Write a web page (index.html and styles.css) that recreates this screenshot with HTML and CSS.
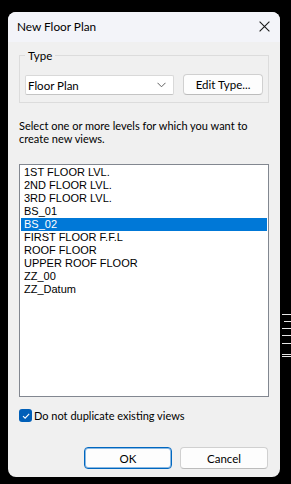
FILE: index.html
```html
<!DOCTYPE html>
<html>
<head>
<meta charset="utf-8">
<link rel="stylesheet" href="styles.css">
</head>
<body>
<div class="dialog">
  <div class="titlebar">
    <span class="title">New Floor Plan</span>
    <svg class="close" width="11" height="11" viewBox="0 0 11 11"><path d="M0.6 0.6L10.4 10.4M10.4 0.6L0.6 10.4" stroke="#1a1a1a" stroke-width="1.1" fill="none"/></svg>
  </div>
  <div class="content">
    <div class="group">
      <span class="legend">Type</span>
      <div class="typerow">
        <div class="select">
          <span>Floor Plan</span>
          <svg width="9" height="6" viewBox="0 0 9 6"><path d="M0.5 0.8L4.5 4.8L8.5 0.8" stroke="#606060" stroke-width="1" fill="none"/></svg>
        </div>
        <div class="btn edit">Edit Type...</div>
      </div>
    </div>
    <p class="instr">Select one or more levels for which you want to create new views.</p>
    <div class="list">
      <div class="item">1ST FLOOR LVL.</div>
      <div class="item">2ND FLOOR LVL.</div>
      <div class="item">3RD FLOOR LVL.</div>
      <div class="item">BS_01</div>
      <div class="item sel">BS_02</div>
      <div class="item">FIRST FLOOR F.F.L</div>
      <div class="item">ROOF FLOOR</div>
      <div class="item">UPPER ROOF FLOOR</div>
      <div class="item">ZZ_00</div>
      <div class="item">ZZ_Datum</div>
    </div>
    <div class="check">
      <span class="box"><svg width="10" height="10" viewBox="0 0 10 10"><path d="M2 5.2L4.1 7.2L8.2 2.8" stroke="#fff" stroke-width="1.1" fill="none"/></svg></span>
      <span>Do not duplicate existing views</span>
    </div>
    <div class="buttons">
      <div class="btn ok">OK</div>
      <div class="btn">Cancel</div>
    </div>
  </div>
</div>
<div class="bgdeco">
  <div class="l1"></div><div class="l2"></div><div class="l3"></div><div class="l4"></div><div class="l5"></div><div class="l6"></div><div class="l7"></div>
</div>
</body>
</html>
```
FILE: styles.css
```css
html, body {
  margin: 0;
  padding: 0;
  background: #000;
  width: 291px;
  height: 484px;
  overflow: hidden;
}
body {
  font-family: Lato, "Liberation Sans", sans-serif;
  font-size: 11px;
  color: #000;
  position: relative;
}
.dialog {
  margin: 12px 0 0 8px;
  width: 272px;
  height: 465px;
  background: #f0f0f0;
  border-radius: 8px;
  overflow: hidden;
  display: flex;
  flex-direction: column;
}
.titlebar {
  height: 30px;
  background: #f3f4f9;
  display: flex;
  align-items: center;
  justify-content: space-between;
  padding: 0 10px 0 9px;
  flex: none;
}
.title {
  font-size: 11.8px;
  color: #000;
  line-height: 14px;
}
.close {
  margin-top: -2px;
}
.content {
  padding: 0 11px;
  display: flex;
  flex-direction: column;
}
.group {
  position: relative;
  margin-top: 13px;
  height: 48px;
  box-sizing: border-box;
  border: 1px solid #dcdcdc;
  padding: 19px 5px 0 5px;
}
.legend {
  position: absolute;
  top: -7px;
  left: 5px;
  padding: 0 3px;
  line-height: 14px;
  background: #f0f0f0;
  font-size: 11.5px;
}
.typerow {
  display: flex;
  align-items: flex-start;
  justify-content: space-between;
}
.select {
  width: 149px;
  height: 20px;
  box-sizing: border-box;
  background: #fff;
  border: 1px solid #d9d9d9;
  border-bottom-color: #c4c4c4;
  border-radius: 2px;
  display: flex;
  align-items: center;
  justify-content: space-between;
  padding: 0 7px 0 2px;
  font-size: 11.5px;
}
.btn {
  background: #fdfdfd;
  border: 1px solid #d0d0d0;
  border-bottom-color: #bcbcbc;
  border-radius: 4px;
  box-sizing: border-box;
  display: flex;
  align-items: center;
  justify-content: center;
  font-size: 11.5px;
  color: #000;
}
.edit {
  width: 80px;
  height: 21px;
  margin-top: -1px;
}
.instr {
  margin: 16px 0 0 0;
  line-height: 13px;
  font-size: 11px;
  color: #000;
}
.list {
  margin-top: 19px;
  height: 233px;
  box-sizing: border-box;
  background: #fff;
  border: 1px solid #828790;
  padding: 1px;
  font-family: "Liberation Sans", Arial, sans-serif;
  font-size: 11px;
}
.item {
  height: 13px;
  line-height: 13px;
  padding-left: 3px;
}
.item.sel {
  background: #0078d7;
  color: #fff;
}
.check {
  margin-top: 12px;
  display: flex;
  align-items: center;
  gap: 2px;
  font-size: 11px;
  line-height: 13px;
  color: #000;
}
.box {
  width: 13px;
  height: 13px;
  background: #005fb8;
  border-radius: 3px;
  display: flex;
  align-items: center;
  justify-content: center;
}
.buttons {
  margin-top: 25px;
  display: flex;
  justify-content: flex-end;
  gap: 8px;
  padding-right: 1px;
}
.buttons .btn {
  width: 88px;
  height: 22px;
}
.buttons .ok {
  border: 1px solid #0067c0;
  box-shadow: inset 0 0 0 1px rgba(0, 103, 192, 0.45);
}
.bgdeco {
  position: absolute;
  left: 282px;
  top: 313px;
  width: 9px;
  height: 50px;
}
.bgdeco div {
  position: absolute;
  left: 0;
  width: 9px;
  height: 1px;
  background: #e8e8e8;
}
.bgdeco .l1 { top: 1px; }
.bgdeco .l2 { top: 8px; left: 2px; width: 7px; }
.bgdeco .l3 { top: 15px; }
.bgdeco .l4 { top: 22px; }
.bgdeco .l5 { top: 30px; }
.bgdeco .l6 { top: 41px; }
.bgdeco .l7 { top: 43px; }
```
